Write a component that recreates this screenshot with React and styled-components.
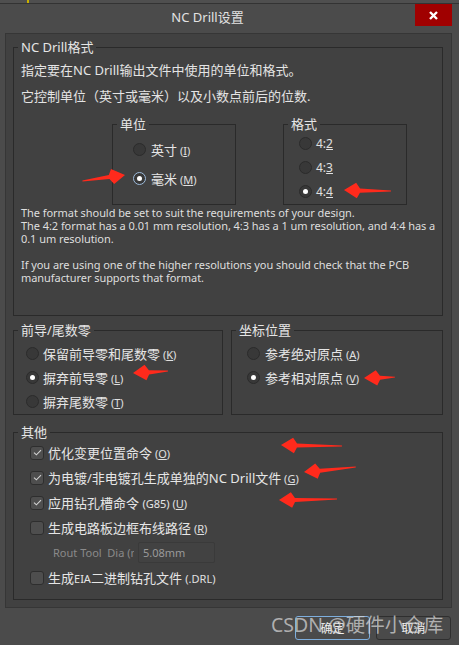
import React from "react";
import styled, { createGlobalStyle } from "styled-components";

const GlobalStyle = createGlobalStyle`
  html, body { margin: 0; padding: 0; background: #4b4b4b; }
  body {
    font-family: "Noto Sans", "Noto Sans CJK SC", sans-serif;
    color: #e4e4e4;
  }
  * { box-sizing: border-box; }
`;

const Window = styled.div`
  position: relative;
  width: 459px;
  height: 645px;
  overflow: hidden;
  background: #4b4b4b;
`;

const TopStrip = styled.div`
  height: 4px;
  background: #4f4f4f;
  border-bottom: 1px solid #333;
  padding-left: 27px;
  display: flex;
`;

const Marker = styled.span`
  width: 2px;
  height: 3px;
  background: #c9b200;
`;

const Dialog = styled.div`
  width: 452px;
`;

const TitleBar = styled.div`
  display: flex;
  align-items: flex-start;
  height: 29px;
`;

const Title = styled.div`
  flex: 1;
  text-align: center;
  font-size: 13px;
  line-height: 26px;
  color: #e2e2e2;
`;

const CloseButton = styled.div`
  width: 37px;
  height: 22px;
  background: #a00000;
  display: flex;
  align-items: center;
  justify-content: center;
`;

const Panel = styled.div`
  margin-left: 5px;
  width: 447px;
  background: #414141;
  border: 1px solid #363636;
  padding: 6px 8px 7px 7px;
`;

const Group = styled.fieldset`
  margin: 0;
  padding: 0;
  min-width: 0;
  border: 1px solid #2a2a2a;
  width: ${(p) => (p.$w ? `${p.$w}px` : "auto")};
  height: ${(p) => (p.$h ? `${p.$h}px` : "auto")};
  margin-top: ${(p) => p.$mt || 0}px;
`;

const Legend = styled.legend`
  margin-left: 4px;
  padding: 0 3px;
  font-size: 13px;
  line-height: 14px;
  color: #e6e6e6;
`;

const GroupBody = styled.div`
  padding: ${(p) => p.$pad};
  display: flex;
  flex-direction: column;
`;

const Para = styled.div`
  font-size: 13px;
  line-height: 18px;
  margin-top: ${(p) => p.$mt || 0}px;
  white-space: nowrap;
`;

const SubRow = styled.div`
  display: flex;
  gap: 47px;
  margin: 12px 0 0 98px;
`;

const Note = styled.div`
  font-size: 11px;
  line-height: 13px;
  letter-spacing: -0.06px;
  color: #dedede;
  white-space: nowrap;
  margin-top: ${(p) => p.$mt || 0}px;
`;

const TwoCols = styled.div`
  display: grid;
  grid-template-columns: 210px 212px;
  column-gap: 8px;
  margin-top: 7px;
`;

const OptionRow = styled.div`
  display: flex;
  align-items: center;
  gap: ${(p) => p.$gap || 4}px;
  height: ${(p) => p.$h || 24}px;
  white-space: nowrap;
`;

const Radio = styled.span`
  flex: none;
  width: 13px;
  height: 13px;
  border-radius: 50%;
  background: #383838;
  border: 1px solid ${(p) => (p.$focus ? "#9dbbdb" : "#2b2b2b")};
  display: flex;
  align-items: center;
  justify-content: center;
  &::after {
    content: "";
    width: 5px;
    height: 5px;
    border-radius: 50%;
    background: #ffffff;
    display: ${(p) => (p.$checked ? "block" : "none")};
  }
`;

const Check = styled.span`
  flex: none;
  width: 14px;
  height: 14px;
  border-radius: 3px;
  background: #4e4e4e;
  border: 1px solid #2e2e2e;
  display: flex;
  align-items: center;
  justify-content: center;
`;

const Label = styled.span`
  font-size: 13px;
  color: #e6e6e6;
`;

const Key = styled.span`
  font-size: 11px;
  color: #e0e0e0;
  u { text-underline-offset: 1px; }
`;

const Small = styled.span`
  font-size: 11px;
`;

const FormatLabel = styled.span`
  font-size: 12px;
  color: #e0e0e0;
  u { text-underline-offset: 1px; }
`;

const DimLabel = styled.span`
  display: inline-block;
  width: 81px;
  overflow: hidden;
  font-size: 11px;
  color: #8a8a8a;
  margin-left: 23px;
  white-space: pre;
`;

const DimInput = styled.div`
  width: 77px;
  height: 21px;
  border: 1px solid #3a3a3a;
  border-radius: 2px;
  background: #424242;
  font-size: 11px;
  color: #9a9a9a;
  line-height: 19px;
  padding-left: 4px;
`;

const Footer = styled.div`
  display: flex;
  justify-content: flex-end;
  gap: 6px;
  padding: 8px 1px 0 0;
`;

const Button = styled.div`
  width: 75px;
  height: 24px;
  border-radius: 3px;
  border: 1px solid ${(p) => (p.$primary ? "#7eaedd" : "#2f2f2f")};
  background: #4a4a4a;
  font-size: 12px;
  color: #f0f0f0;
  display: flex;
  align-items: center;
  justify-content: center;
`;

const Watermark = styled.div`
  position: absolute;
  left: 271px;
  top: 611px;
  font-size: 19.5px;
  line-height: 28px;
  color: rgba(215, 215, 215, 0.72);
  white-space: nowrap;
  pointer-events: none;
`;

const ArrowSvg = styled.svg`
  position: absolute;
  overflow: visible;
  transform-origin: 0 9px;
  pointer-events: none;
`;

function Arrow({ x, y, len, angle }) {
  const d = `M0 9 L12 1.5 L16 7.2 L${len} 8.6 L${len} 9.5 L16 11.3 L13 17 Z`;
  return (
    <ArrowSvg
      width={len}
      height={18}
      style={{ left: x, top: y - 9, transform: `rotate(${angle}deg)` }}
    >
      <path d={d} fill="#ff2a1c" />
    </ArrowSvg>
  );
}

function CheckMark() {
  return (
    <svg width="9" height="7" viewBox="0 0 9 7">
      <path d="M1 3.6 L3.4 5.8 L8 1.2" fill="none" stroke="#d2d2d2" strokeWidth="1.1" />
    </svg>
  );
}

function RadioOpt({ checked, focus, children, gap }) {
  return (
    <OptionRow $gap={gap}>
      <Radio $checked={checked} $focus={focus} />
      {children}
    </OptionRow>
  );
}

function CheckOpt({ checked, children }) {
  return (
    <OptionRow $h={25}>
      <Check>{checked && <CheckMark />}</Check>
      {children}
    </OptionRow>
  );
}

const KeyText = ({ k, pre = "", post = "" }) => (
  <Key>
    {" "}
    ({pre}
    <u>{k}</u>
    {post})
  </Key>
);

export default function App() {
  return (
    <Window>
      <GlobalStyle />
      <TopStrip>
        <Marker />
      </TopStrip>
      <Dialog>
        <TitleBar>
          <Title>NC Drill设置</Title>
          <CloseButton>
            <svg width="9" height="9" viewBox="0 0 9 9">
              <path d="M1 1 L8 8 M8 1 L1 8" stroke="#fff" strokeWidth="2.4" />
            </svg>
          </CloseButton>
        </TitleBar>
        <Panel>
          <Group $h={276}>
            <Legend>NC Drill格式</Legend>
            <GroupBody $pad="7px 7px 0 7px">
              <Para>指定要在NC Drill输出文件中使用的单位和格式。</Para>
              <Para $mt={8}>它控制单位（英寸或毫米）以及小数点前后的位数.</Para>
            </GroupBody>
            <SubRow>
              <Group $w={124} $h={88}>
                <Legend>单位</Legend>
                <GroupBody $pad="6px 0 0 20px">
                  <RadioOpt gap={5}>
                    <Label>
                      英寸<KeyText k="I" />
                    </Label>
                  </RadioOpt>
                  <OptionRow $h={5} />
                  <RadioOpt checked focus gap={5}>
                    <Label>
                      毫米<KeyText k="M" />
                    </Label>
                  </RadioOpt>
                </GroupBody>
              </Group>
              <Group $w={124} $h={88}>
                <Legend>格式</Legend>
                <GroupBody $pad="0 0 0 15px">
                  <RadioOpt>
                    <FormatLabel>
                      4:<u>2</u>
                    </FormatLabel>
                  </RadioOpt>
                  <RadioOpt>
                    <FormatLabel>
                      4:<u>3</u>
                    </FormatLabel>
                  </RadioOpt>
                  <RadioOpt checked>
                    <FormatLabel>
                      4:<u>4</u>
                    </FormatLabel>
                  </RadioOpt>
                </GroupBody>
              </Group>
            </SubRow>
            <GroupBody $pad="1px 7px 0 7px">
              <Note>The format should be set to suit the requirements of your design.</Note>
              <Note>
                The 4:2 format has a 0.01 mm resolution, 4:3 has a 1 um resolution, and 4:4 has a
              </Note>
              <Note>0.1 um resolution.</Note>
              <Note $mt={13}>
                If you are using one of the higher resolutions you should check that the PCB
              </Note>
              <Note>manufacturer supports that format.</Note>
            </GroupBody>
          </Group>

          <TwoCols>
            <Group $h={92}>
              <Legend>前导/尾数零</Legend>
              <GroupBody $pad="4px 0 0 12px">
                <RadioOpt>
                  <Label>
                    保留前导零和尾数零<KeyText k="K" />
                  </Label>
                </RadioOpt>
                <RadioOpt checked>
                  <Label>
                    摒弃前导零<KeyText k="L" />
                  </Label>
                </RadioOpt>
                <RadioOpt>
                  <Label>
                    摒弃尾数零<KeyText k="T" />
                  </Label>
                </RadioOpt>
              </GroupBody>
            </Group>
            <Group $h={92}>
              <Legend>坐标位置</Legend>
              <GroupBody $pad="4px 0 0 15px">
                <RadioOpt gap={5}>
                  <Label>
                    参考绝对原点<KeyText k="A" />
                  </Label>
                </RadioOpt>
                <RadioOpt checked gap={5}>
                  <Label>
                    参考相对原点<KeyText k="V" />
                  </Label>
                </RadioOpt>
              </GroupBody>
            </Group>
          </TwoCols>

          <Group $h={175} $mt={10}>
            <Legend>其他</Legend>
            <GroupBody $pad="1px 0 0 16px">
              <CheckOpt checked>
                <Label>
                  优化变更位置命令<KeyText k="O" />
                </Label>
              </CheckOpt>
              <CheckOpt checked>
                <Label>
                  为电镀/非电镀孔生成单独的NC Drill文件<KeyText k="G" />
                </Label>
              </CheckOpt>
              <CheckOpt checked>
                <Label>
                  应用钻孔槽命令 <Small>(G85)</Small>
                  <KeyText k="U" />
                </Label>
              </CheckOpt>
              <CheckOpt>
                <Label>
                  生成电路板边框布线路径<KeyText k="R" />
                </Label>
              </CheckOpt>
              <OptionRow $h={25} $gap={0}>
                <DimLabel>{"Rout Tool  Dia (mm)"}</DimLabel>
                <DimInput>5.08mm</DimInput>
              </OptionRow>
              <CheckOpt>
                <Label>
                  生成<Small>EIA</Small>二进制钻孔文件 <Key>(.DRL)</Key>
                </Label>
              </CheckOpt>
            </GroupBody>
          </Group>
        </Panel>
        <Footer>
          <Button $primary>确定</Button>
          <Button>取消</Button>
        </Footer>
      </Dialog>

      <Arrow x={125} y={175} len={43} angle={171.9} />
      <Arrow x={344} y={190} len={47} angle={1.2} />
      <Arrow x={133} y={373} len={35} angle={-3.3} />
      <Arrow x={364} y={378} len={31} angle={-1.8} />
      <Arrow x={281} y={445} len={61} angle={0.9} />
      <Arrow x={304} y={472} len={52} angle={-5.5} />
      <Arrow x={279} y={500} len={58} angle={-1} />

      <Watermark>CSDN @硬件小仓库</Watermark>
    </Window>
  );
}
